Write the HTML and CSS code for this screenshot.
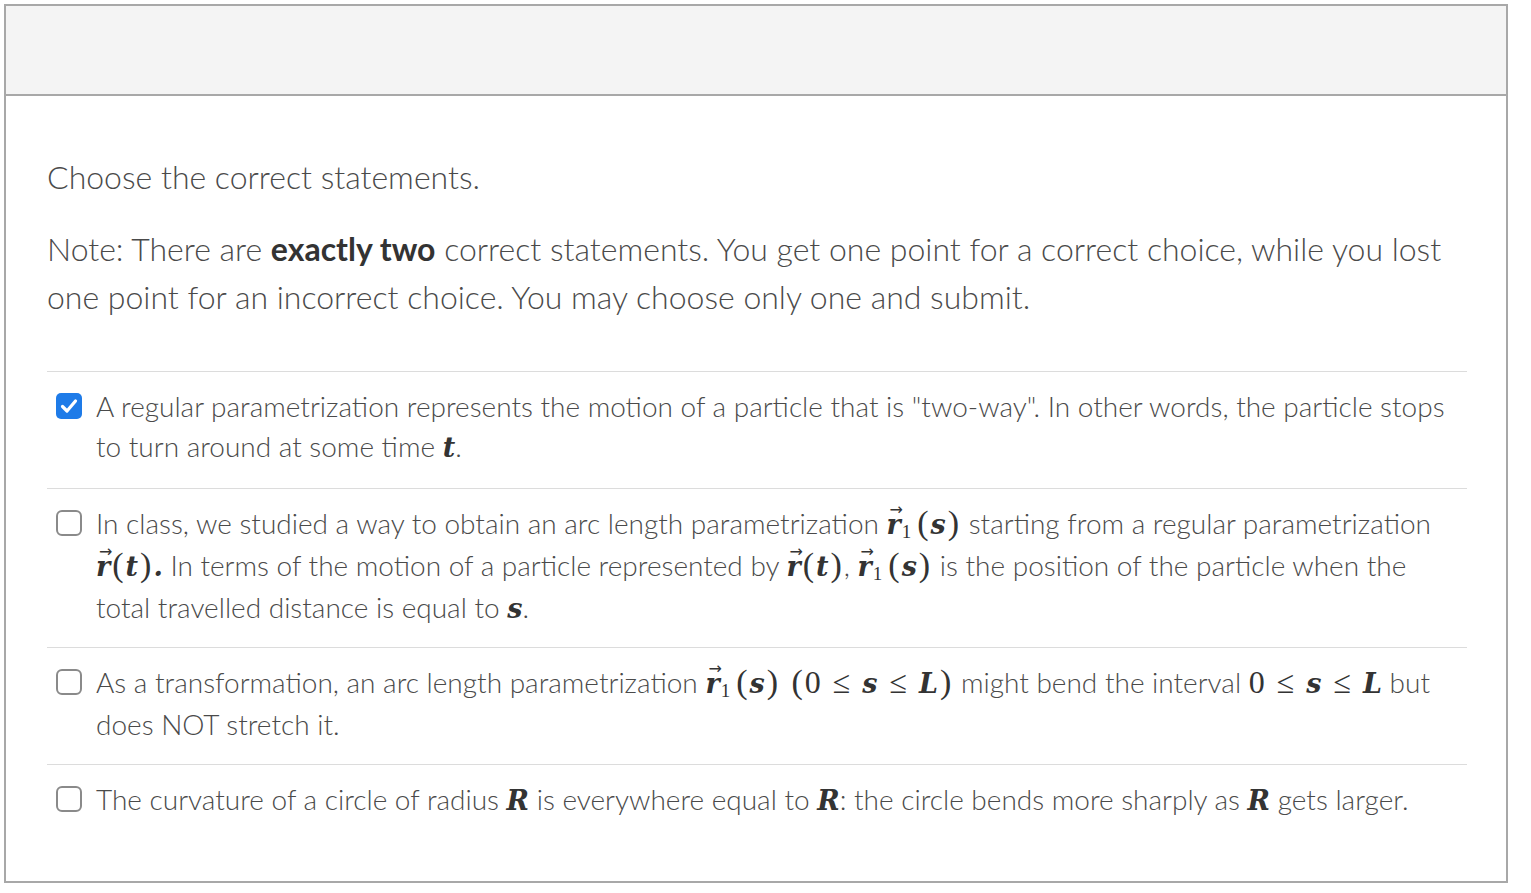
FILE: index.html
```html
<!DOCTYPE html>
<html lang="en">
<head>
  <meta charset="UTF-8" />
  <title>Quiz question</title>
  <link rel="stylesheet" href="styles.css">
</head>
<body>

<div class="quiz">
  <div class="quiz-header"></div>

  <div class="quiz-body">
    <p class="prompt">Choose the correct statements.</p>
    <p class="prompt note">Note: There are <strong>exactly two</strong> correct statements. You get one point for a correct choice, while you lost one point for an incorrect choice. You may choose only one and submit.</p>

    <div class="answers">
      <label class="answer">
        <span class="box checked">
          <svg viewBox="0 0 26 26" width="26" height="26"><path d="M6.5 13.5 L11 18 L19.5 8" fill="none" stroke="#fff" stroke-width="3.2" stroke-linecap="round" stroke-linejoin="round"/></svg>
        </span>
        <span class="answer-text">A regular parametrization represents the motion of a particle that is "two-way". In other words, the particle stops to turn around at some time <span class="m">t</span>.</span>
      </label>

      <label class="answer">
        <span class="box"></span>
        <span class="answer-text">In class, we studied a way to obtain an arc length parametrization <span class="m"><span class="vec">r</span><sub>1</sub><span class="up par">(</span>s<span class="up par">)</span></span> starting from a regular parametrization <span class="m"><span class="vec">r</span><span class="up par">(</span>t<span class="up par">)</span>.</span> In terms of the motion of a particle represented by <span class="m"><span class="vec">r</span><span class="up par">(</span>t<span class="up par">)</span></span>, <span class="m"><span class="vec">r</span><sub>1</sub><span class="up par">(</span>s<span class="up par">)</span></span> is the position of the particle when the total travelled distance is equal to <span class="m">s</span>.</span>
      </label>

      <label class="answer">
        <span class="box"></span>
        <span class="answer-text">As a transformation, an arc length parametrization <span class="m"><span class="vec">r</span><sub>1</sub><span class="up par">(</span>s<span class="up par">)</span> <span class="up par">(</span><span class="up">0</span><span class="up rel">≤</span>s<span class="up rel">≤</span>L<span class="up par">)</span></span> might bend the interval <span class="m"><span class="up">0</span><span class="up rel">≤</span>s<span class="up rel">≤</span>L</span> but does NOT stretch it.</span>
      </label>

      <label class="answer">
        <span class="box"></span>
        <span class="answer-text">The curvature of a circle of radius <span class="m">R</span> is everywhere equal to <span class="m">R</span>: the circle bends more sharply as <span class="m">R</span> gets larger.</span>
      </label>
    </div>
  </div>
</div>

</body>
</html>
```

FILE: styles.css
```css
* {
  box-sizing: border-box;
}

body {
  margin: 0;
  background: #fff;
  font-family: Lato, "Open Sans", sans-serif;
  color: #4a4a4a;
}

.quiz {
  margin: 4px 0 0 4px;
  width: 1504px;
  height: 879px;
  border: 2px solid #a8a8a8;
  display: flex;
  flex-direction: column;
}

.quiz-header {
  height: 90px;
  background: #f4f4f4;
  border-bottom: 2px solid #a8a8a8;
}

.quiz-body {
  padding: 57px 39px 0 41px;
}

.prompt {
  margin: 0 0 24px;
  font-size: 32px;
  line-height: 48px;
  font-weight: 300;
}

.prompt strong {
  font-weight: 700;
  color: #333;
}

.note {
  margin-bottom: 50px;
}

.answer {
  display: flex;
  align-items: flex-start;
  border-top: 1px solid #dcdcdc;
  padding: 14px 0 20px 9px;
  font-size: 28px;
  line-height: 40px;
  font-weight: 300;
}

.answer:nth-child(2) {
  padding-bottom: 18px;
}

.box {
  flex: none;
  width: 26px;
  height: 26px;
  margin-top: 7px;
  margin-right: 14px;
  border: 2.5px solid #8a8a8a;
  border-radius: 6px;
  background: #fff;
}

.box.checked {
  border: none;
  background: #1e7be8;
  border-radius: 5px;
}

.box svg {
  display: block;
}

.answer-text {
  flex: 1;
}

/* math bits */
.m {
  font-family: "DejaVu Serif", "Liberation Serif", serif;
  font-style: italic;
  font-weight: 700;
  font-size: 27px;
  color: #333;
  white-space: nowrap;
}

.m .up {
  font-style: normal;
  font-weight: 400;
  font-family: "Liberation Serif", serif;
  font-size: 32px;
}

.m .par {
  font-size: 34px;
  margin: 0 2px;
}

.m .rel {
  margin: 0 12px;
}

.m sub {
  font-style: normal;
  font-weight: 400;
  font-family: "Liberation Serif", serif;
  font-size: 19px;
  line-height: 0;
  vertical-align: -4px;
  margin: 0 4px 0 1px;
}

.vec {
  position: relative;
  display: inline-block;
}

.vec::before {
  content: "\2192";
  position: absolute;
  left: 3px;
  top: -15px;
  font-family: "DejaVu Sans", sans-serif;
  font-style: normal;
  font-weight: 400;
  font-size: 16px;
}
```
